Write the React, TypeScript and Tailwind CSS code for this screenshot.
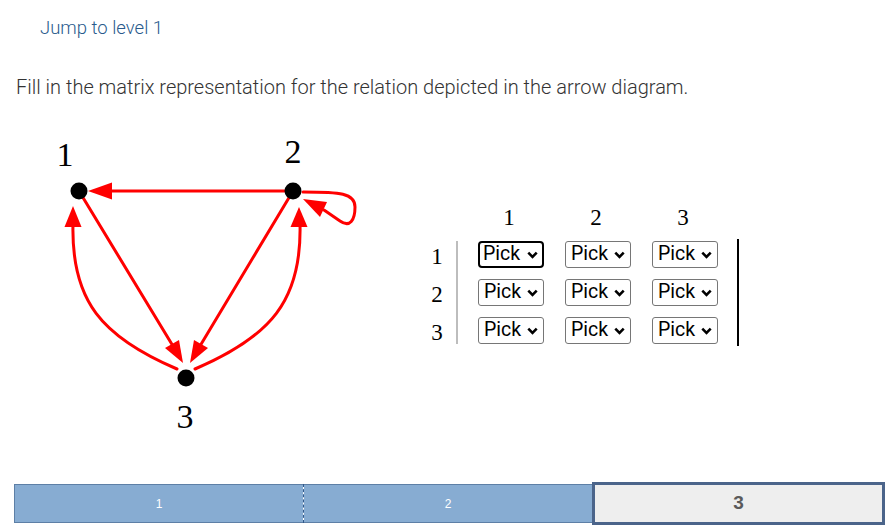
import React from 'react';

const RED = '#ff0000';

// arrowhead helper: tip + two base points
function Head({ pts }: { pts: string }) {
  return <polygon points={pts} fill={RED} />;
}

function ArrowDiagram() {
  return (
    <svg width="340" height="305" viewBox="0 0 340 305" className="ml-[40px] shrink-0">
      <g stroke={RED} strokeWidth="3" fill="none" strokeLinecap="round">
        {/* 2 -> 1 */}
        <line x1="253" y1="60" x2="66" y2="60" />
        {/* 1 -> 3 */}
        <line x1="39" y1="60" x2="136" y2="220" />
        {/* 2 -> 3 */}
        <line x1="253" y1="60" x2="157" y2="220" />
        {/* 3 -> 1 curved */}
        <path d="M137,238 C62,206 31,170 33,93" />
        {/* 3 -> 2 curved */}
        <path d="M155,238 C230,206 262,170 260,93" />
        {/* 2 -> 2 loop */}
        <path d="M263,61 C300,61 315,62 315,76 C315,89 310,97 300,90 L284,79" />
      </g>
      <Head pts="48,60 72,51.5 72,68.5" />
      <Head pts="143,232 125,217 139,209" />
      <Head pts="150,232 168,217 154,209" />
      <Head pts="33,75 24.5,96 41.5,96" />
      <Head pts="259,76 250.5,96 267.5,96" />
      <Head pts="263,68 287,71 280,86" />
      <circle cx="39" cy="60" r="8.5" fill="#000" />
      <circle cx="253" cy="60" r="8.5" fill="#000" />
      <circle cx="146" cy="247" r="8.5" fill="#000" />
      <g fontFamily="'Liberation Serif', serif" fontSize="34" fill="#000" textAnchor="middle">
        <text x="25" y="35">1</text>
        <text x="253" y="32">2</text>
        <text x="145" y="297">3</text>
      </g>
    </svg>
  );
}

function Pick({ focused }: { focused?: boolean }) {
  return (
    <div
      role="combobox"
      className={`w-[66px] h-[27px] flex items-center justify-between bg-white text-black text-[19.5px] leading-none font-['Roboto',sans-serif] ${
        focused ? 'border-2 border-black rounded-[4px] pl-[3px] pr-[4px]' : 'border border-[#767676] rounded-[3px] pl-[5px] pr-[5px]'
      }`}
    >
      <span className="-mt-[1px]">Pick</span>
      <svg className="w-[11px] h-[8px]" viewBox="0 0 11 8">
        <path d="M1.3,1.6 L5.5,5.8 L9.7,1.6" stroke="#000" strokeWidth="2.6" fill="none" />
      </svg>
    </div>
  );
}

function Matrix() {
  return (
    <div className="ml-[45px] mt-[72px] flex font-['Liberation_Serif',serif] text-[23px] text-black">
      <div className="w-[24px] pt-[40px] flex flex-col gap-[11px]">
        {['1', '2', '3'].map(n => (
          <div key={n} className="h-[27px] flex items-center justify-center leading-none">{n}</div>
        ))}
      </div>
      <div className="ml-[7px] flex flex-col">
        <div className="h-[28px] flex items-center pl-[22px] gap-[21px]">
          {['1', '2', '3'].map(n => (
            <div key={n} className="w-[66px] text-center leading-none pr-[4px]">{n}</div>
          ))}
        </div>
        <div className="mt-[10px] flex">
          <div className="w-[2px] bg-[#bdbdbd]" />
          <div className="ml-[20px] mr-[19px] grid grid-cols-[66px_66px_66px] gap-x-[21px] gap-y-[11px]">
            {Array.from({ length: 9 }).map((_, i) => (
              <Pick key={i} focused={i === 0} />
            ))}
          </div>
          <div className="w-[2px] bg-black -my-[2px]" />
        </div>
      </div>
    </div>
  );
}

function LevelBar() {
  return (
    <div className="mt-[46px] ml-[14px] w-[871px] h-[43px] flex items-center font-['Liberation_Sans',Arial,sans-serif]">
      <div className="flex-1 h-[39px] bg-[#87acd2] border border-r-0 border-[#5d7fa6] flex items-center justify-center text-white text-[12px]">
        1
      </div>
      <div className="h-[39px] border-l border-dashed border-[#32598a]" />
      <div className="flex-1 h-[39px] bg-[#87acd2] border-y border-[#5d7fa6] flex items-center justify-center text-white text-[12px]">
        2
      </div>
      <div className="w-[293px] h-[43px] bg-[#eeeeee] border-[3px] border-[#4b648a] flex items-center justify-center text-[#5a5a5a] text-[19px] font-bold">
        3
      </div>
    </div>
  );
}

export default function App() {
  return (
    <div className="w-[887px] h-[528px] bg-white overflow-hidden font-['Roboto',sans-serif]">
      <div className="pt-[16px] pl-[40px] text-[18.5px] leading-[24px] text-[#285a8c] font-light">Jump to level 1</div>
      <p className="mt-[33px] pl-[16px] text-[20px] leading-[28px] text-[#333] font-light">
        Fill in the matrix representation for the relation depicted in the arrow diagram.
      </p>
      <div className="mt-[30px] flex">
        <ArrowDiagram />
        <Matrix />
      </div>
      <LevelBar />
    </div>
  );
}
